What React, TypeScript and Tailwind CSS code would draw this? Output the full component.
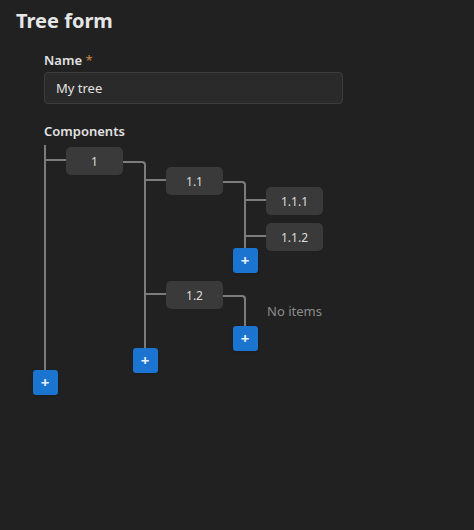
type TreeItem = {
  label: string;
  // undefined = plain leaf, [] = node that can hold items but has none yet
  children?: TreeItem[];
};

const tree: TreeItem[] = [
  {
    label: "1",
    children: [
      {
        label: "1.1",
        children: [{ label: "1.1.1" }, { label: "1.1.2" }],
      },
      { label: "1.2", children: [] },
    ],
  },
];

function AddButton() {
  return (
    <button
      type="button"
      className="-mt-[3px] -ml-[11.5px] flex h-[25px] w-[25px] shrink-0 items-center justify-center rounded-[3px] bg-[#1a74d0] text-[15px] font-bold leading-none text-[#e8f1fb] shadow-sm"
    >
      +
    </button>
  );
}

function ChildList({ items }: { items: TreeItem[] }) {
  return (
    <div className="flex flex-col items-start">
      <div className="flex flex-col gap-2 border-l-2 border-[#7c7c7c]">
        {items.length === 0 ? (
          <div className="h-[28px] whitespace-nowrap pl-[21px] text-[13px] leading-[20px] text-[#8c8c8c]">
            No items
          </div>
        ) : (
          items.map((item, index) => (
            <div key={index} className="flex items-start">
              <div className="mt-[12px] h-[2px] w-[20px] shrink-0 bg-[#7c7c7c]" />
              <TreeNode item={item} />
            </div>
          ))
        )}
      </div>
      <AddButton />
    </div>
  );
}

function TreeNode({ item }: { item: TreeItem }) {
  return (
    <div className="flex items-start">
      <div className="flex h-[28px] w-[57px] shrink-0 items-center justify-center rounded-[5px] bg-[#3a3a3a] pt-[1px] text-[12px] text-[#dcdcdc]">
        {item.label}
      </div>
      {item.children && (
        <div className="mt-[14px] flex shrink-0 flex-col">
          <div className="h-[6px] w-[23px] rounded-tr-[4px] border-t-2 border-r-2 border-[#7c7c7c]" />
          <div className="ml-[21px]">
            <ChildList items={item.children} />
          </div>
        </div>
      )}
    </div>
  );
}

export default function App() {
  return (
    <div
      className="min-h-[530px] bg-[#212121] px-4 pt-[6px] text-[#e2e2e2]"
      style={{ fontFamily: '"Noto Sans", "Open Sans", sans-serif' }}
    >
      <h1 className="text-[20px] font-bold leading-[30px] text-[#e6e6e6]">Tree form</h1>
      <div className="ml-[28px] mt-[14px] flex w-[299px] flex-col">
        <label className="text-[13px] font-semibold leading-[20px]">
          Name <span className="text-[#b5763d]">*</span>
        </label>
        <input
          type="text"
          defaultValue="My tree"
          className="mt-[2px] h-[32px] w-full rounded-[4px] border border-[#3d3d3d] bg-[#2a2a2a] px-[11px] text-[13px] text-[#e2e2e2] outline-none"
        />
        <label className="mt-[17px] text-[13px] font-semibold leading-[20px]">Components</label>
        <div className="mt-[4px] flex">
          <div className="flex flex-col items-start">
            <div className="flex flex-col gap-2 border-l-2 border-[#7c7c7c] pt-[2px]">
              {tree.map((item, index) => (
                <div key={index} className="flex items-start">
                  <div className="mt-[12px] h-[2px] w-[20px] shrink-0 bg-[#7c7c7c]" />
                  <TreeNode item={item} />
                </div>
              ))}
            </div>
            <AddButton />
          </div>
        </div>
      </div>
    </div>
  );
}
